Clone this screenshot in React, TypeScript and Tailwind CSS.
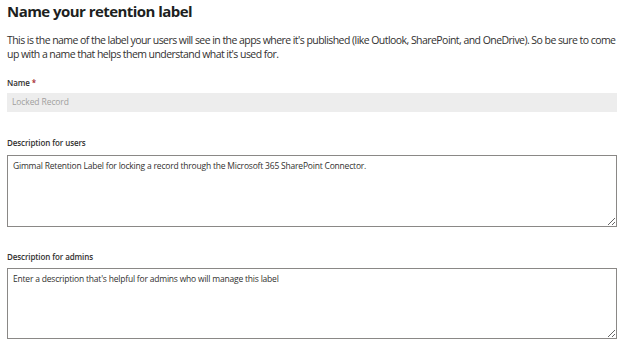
export default function App() {
  return (
    <div className="h-[347px] w-[624px] overflow-hidden bg-white pl-[7px] pr-[3px] text-[#323130]" style={{ fontFamily: '"Open Sans", "Noto Sans", sans-serif' }}>
      <h1 className="pt-[1px] text-[15px] font-bold leading-[20px] tracking-[-0.55px] text-[#201f1e]">Name your retention label</h1>
      <p className="mt-[13px] text-[10.5px] leading-[13.5px] tracking-[-0.55px]">
        <span className="whitespace-nowrap">
          This is the name of the label your users will see in the apps where it's published (like Outlook, SharePoint, and OneDrive). So be sure to come
        </span>
        <br />
        up with a name that helps them understand what it's used for.
      </p>
      <div className="mt-[16px] text-[8px] font-semibold leading-[12px] tracking-[-0.1px]">
        Name <span className="text-[#a4262c]">*</span>
      </div>
      <div className="mt-[4px] flex h-[19px] w-[610px] items-center bg-[#ededed] px-[5px] text-[8.5px] tracking-[-0.1px] text-[#a19f9d]">Locked Record</div>
      <div className="mt-[25px] text-[8px] font-semibold leading-[12px] tracking-[-0.1px]">Description for users</div>
      <textarea
        readOnly
        className="mt-[6px] block h-[72px] w-[610px] resize-y border border-[#8a8886] px-[5px] pt-[4px] text-[8.5px] leading-[12px] tracking-[-0.2px] text-[#323130] outline-none"
        defaultValue="Gimmal Retention Label for locking a record through the Microsoft 365 SharePoint Connector."
      />
      <div className="mt-[24px] text-[8px] font-semibold leading-[12px] tracking-[-0.1px]">Description for admins</div>
      <textarea
        readOnly
        className="mt-[5px] block h-[71px] w-[610px] resize-y border border-[#8a8886] px-[5px] pt-[4px] text-[8.5px] leading-[12px] tracking-[-0.2px] text-[#323130] outline-none"
        defaultValue="Enter a description that's helpful for admins who will manage this label"
      />
    </div>
  );
}
